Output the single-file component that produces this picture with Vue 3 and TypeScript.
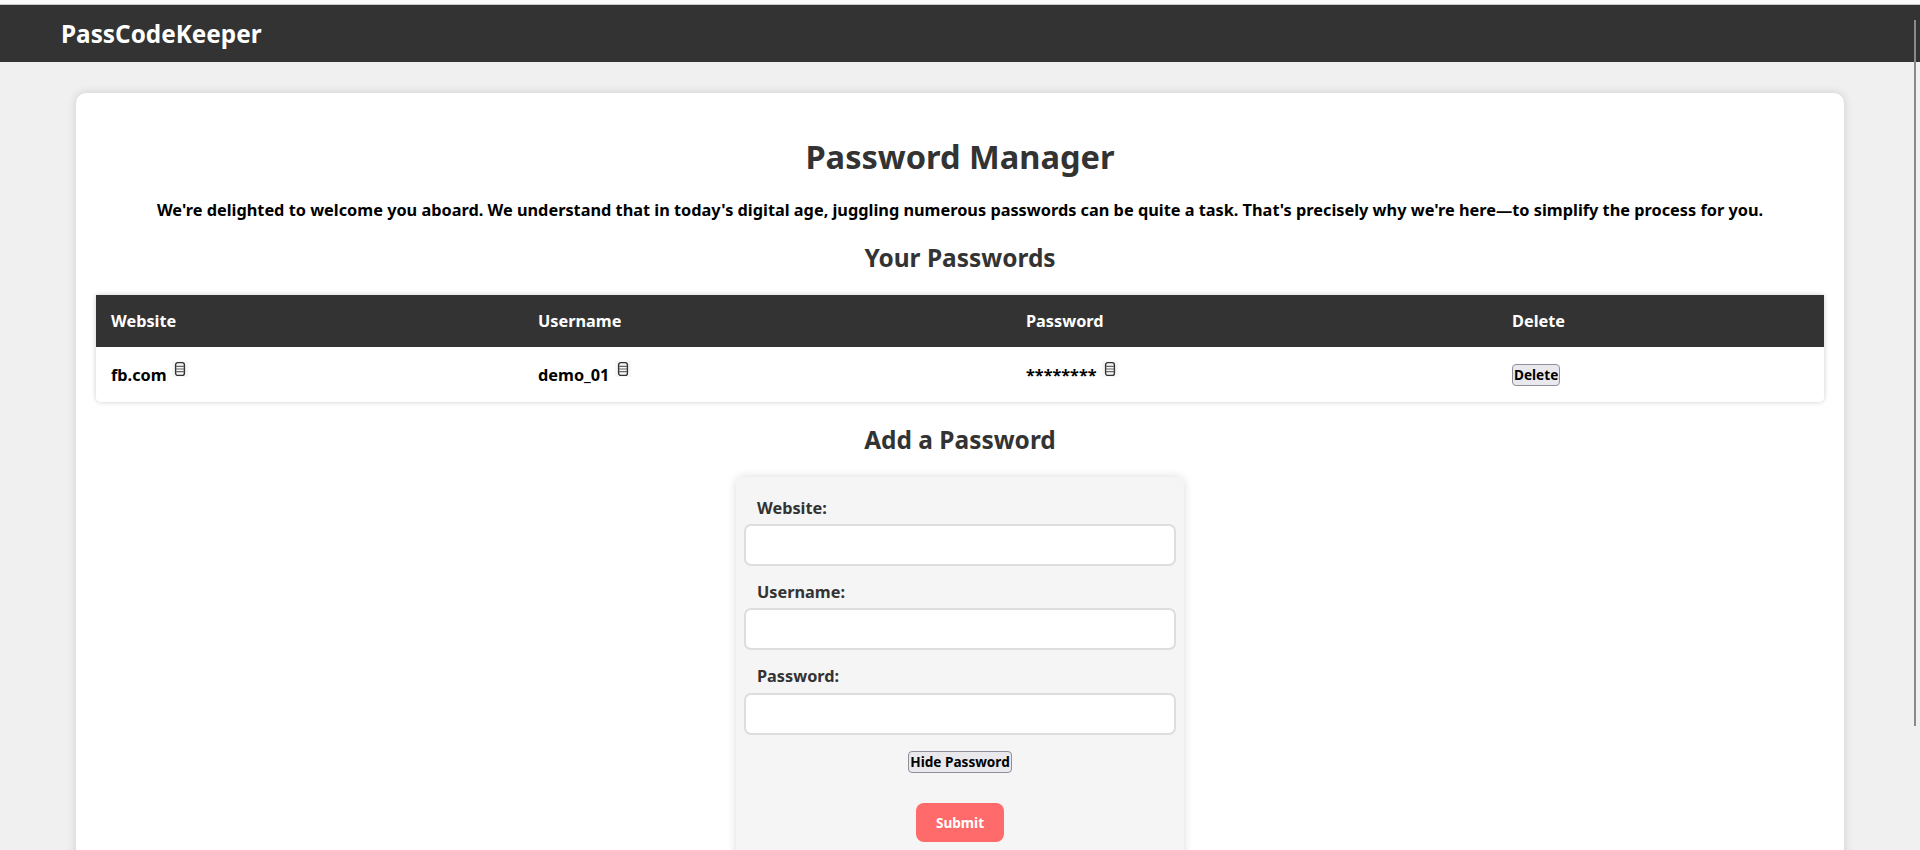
<script setup lang="ts">
interface Entry { site: string; user: string; pass: string }
const entries: Entry[] = [{ site: 'fb.com', user: 'demo_01', pass: '********' }]
const fields: string[] = ['Website', 'Username', 'Password']
</script>

<template>
  <div class="page">
    <nav class="nav"><span class="brand">PassCodeKeeper</span></nav>
    <main class="card">
      <h1 class="title">Password Manager</h1>
      <p class="intro">We're delighted to welcome you aboard. We understand that in today's digital age, juggling numerous passwords can be quite a task. That's precisely why we're here—to simplify the process for you.</p>
      <h2 class="sub">Your Passwords</h2>
      <table class="table">
        <colgroup>
          <col class="c1" /><col class="c2" /><col class="c3" /><col class="c4" />
        </colgroup>
        <thead>
          <tr><th>Website</th><th>Username</th><th>Password</th><th>Delete</th></tr>
        </thead>
        <tbody>
          <tr v-for="e in entries" :key="e.site">
            <td v-for="v in [e.site, e.user, e.pass]" :key="v" class="text-cell">
              {{ v }}
              <span class="copy">
                <svg width="12" height="16" viewBox="0 0 12 16" fill="none" stroke="#333" stroke-width="1.4">
                  <rect x="1.6" y="1.6" width="8.8" height="12.8" rx="2.2" />
                  <path d="M2 5.4h8M2 8h8M2 10.6h8" stroke="#666" stroke-width="1.2" />
                </svg>
              </span>
            </td>
            <td><button class="native" type="button">Delete</button></td>
          </tr>
        </tbody>
      </table>
      <h2 class="sub add">Add a Password</h2>
      <form class="form" @submit.prevent>
        <template v-for="f in fields" :key="f">
          <label class="label">{{ f }}:</label>
          <input class="input" type="text" />
        </template>
        <button class="native hide" type="button">Hide Password</button>
        <button class="submit" type="submit">Submit</button>
      </form>
    </main>
    <div class="scrollbar"></div>
  </div>
</template>

<style>
html, body { margin: 0; height: 850px; overflow: hidden; background: #f0f0f0; }
</style>

<style scoped>
.page {
  height: 850px;
  overflow: hidden;
  padding-top: 4px;
  box-sizing: border-box;
  background: #f0f0f0;
  font-family: "Noto Sans", "Open Sans", sans-serif;
  color: #333;
  box-shadow: inset 0 4px 0 #fafafa;
}
.nav {
  height: 58px;
  box-sizing: border-box;
  border-top: 1px solid #c8c8c8;
  padding-top: 2px;
  background: #333;
  display: flex;
  align-items: center;
  padding-left: 61px;
}
.brand { color: #fff; font-size: 24.3px; font-weight: 700; line-height: 1; }
.card {
  margin: 31px 76px 0;
  padding: 20px;
  background: #fff;
  border-radius: 10px;
  box-shadow: 0 0 10px rgba(0, 0, 0, 0.15);
  text-align: center;
}
.title { margin: 22px 0 0; font-size: 32.6px; line-height: 44px; font-weight: 700; }
.intro { margin: 19.5px 0 0; font-size: 16.31px; line-height: 22px; font-weight: 700; color: #000; }
.sub { margin: 20.5px 0 0; font-size: 24.45px; line-height: 33px; font-weight: 700; }
.add { margin-top: 21px; }
.table {
  width: 100%;
  margin-top: 21px;
  border-collapse: collapse;
  table-layout: fixed;
  text-align: left;
  font-size: 16.3px;
  font-weight: 700;
  color: #000;
  border-radius: 0 0 5px 5px;
  overflow: hidden;
  box-shadow: 0 0 5px rgba(0, 0, 0, 0.2);
}
.c1 { width: 427px; }
.c2 { width: 488px; }
.c3 { width: 486px; }
th {
  height: 52px;
  padding: 0 15px;
  background: #333;
  color: #fff;
  font-weight: 700;
}
td { height: 55px; padding: 0 15px; background: #fff; }
.text-cell { height: 53px; padding-bottom: 2px; }
.copy {
  display: inline-block;
  width: 16px;
  height: 16px;
  margin-left: 1px;
  vertical-align: 4px;
  background: #f7f7f7;
  text-align: center;
}
.copy svg { display: block; margin: 0 auto; }
.native {
  font-family: inherit;
  font-size: 13.6px;
  font-weight: 700;
  color: #000;
  padding: 0 1px;
  height: 22px;
  line-height: 18px;
  background: #e9e9ed;
  border: 1px solid #8f8f9d;
  border-radius: 4px;
}
.form {
  width: 448px;
  box-sizing: border-box;
  margin: 20.5px auto 0;
  padding: 20px 8px 20px;
  background: #f5f5f5;
  border-radius: 8px;
  box-shadow: 0 0 10px rgba(0, 0, 0, 0.15);
  display: flex;
  flex-direction: column;
  align-items: center;
}
.label {
  align-self: flex-start;
  margin-left: 13px;
  font-size: 16.3px;
  line-height: 22.5px;
  font-weight: 700;
}
.input {
  width: 432px;
  height: 42px;
  box-sizing: border-box;
  margin: 5px 0 14.8px;
  border: 2px solid #ddd;
  border-radius: 7px;
  background: #fff;
}
.hide { margin-top: 1.5px; }
.submit {
  margin-top: 30px;
  width: 88px;
  height: 39px;
  border: 0;
  border-radius: 8px;
  background: #ff6b6b;
  color: #fff;
  font-family: inherit;
  font-size: 13.6px;
  font-weight: 700;
}
.scrollbar {
  position: fixed;
  left: 1914px;
  top: 20px;
  width: 2px;
  height: 706px;
  background: #8a8a8a;
}
</style>
